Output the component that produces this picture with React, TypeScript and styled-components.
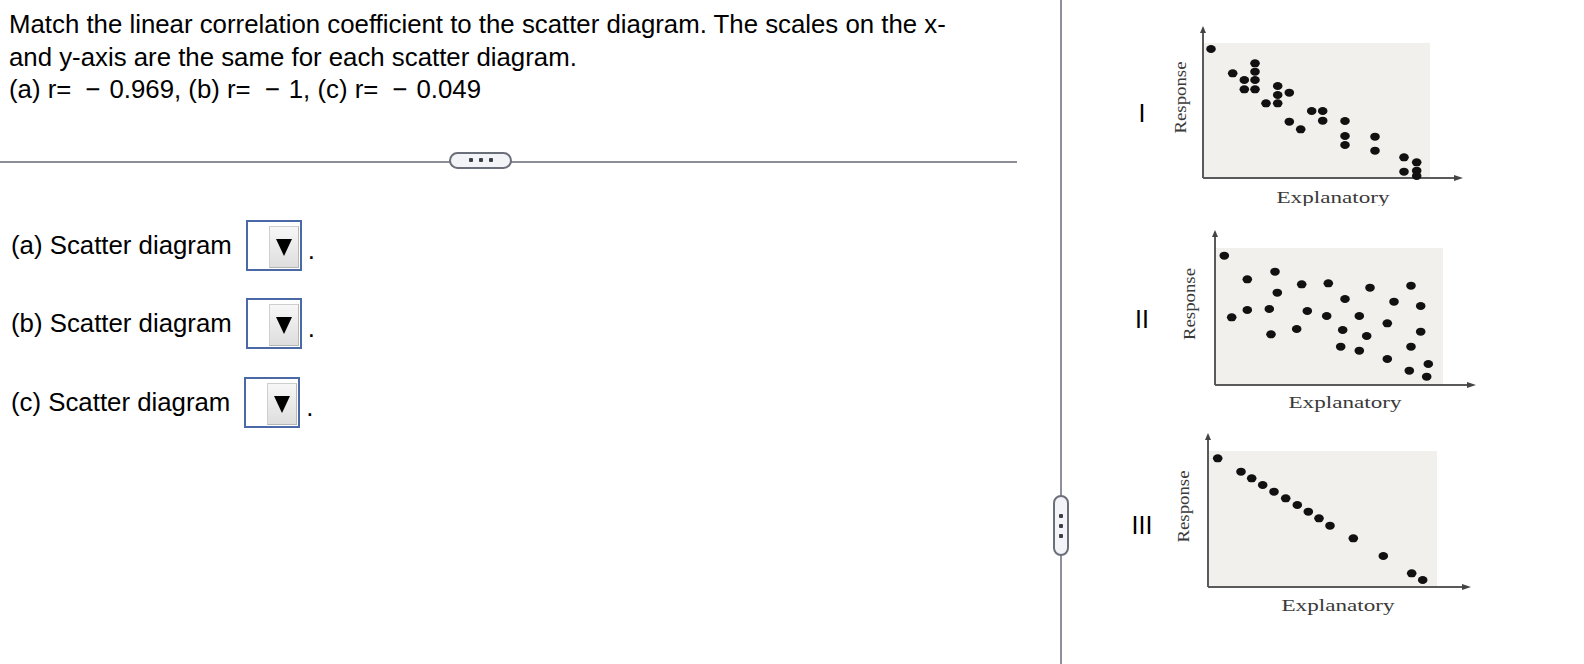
import React from 'react';
import styled, { createGlobalStyle } from 'styled-components';

const GlobalStyle = createGlobalStyle`
  html, body {
    margin: 0;
    padding: 0;
    background: #fff;
  }
  body {
    font-family: "Liberation Sans", Arial, sans-serif;
    color: #000;
  }
`;

const Page = styled.div`
  display: flex;
  width: 1584px;
  height: 664px;
  overflow: hidden;
`;

const LeftPanel = styled.div`
  flex: none;
  width: 1053px;
  display: flex;
  flex-direction: column;
`;

const Question = styled.div`
  padding: 8px 0 0 9px;
  font-size: 25.8px;
  line-height: 32.6px;
`;

const Minus = styled.span`
  margin: 0 9px 0 14px;
`;

const Separator = styled.div`
  position: relative;
  width: 1017px;
  height: 2px;
  margin-top: 55px;
  background: #8b8e97;
`;

const HPill = styled.div`
  position: absolute;
  left: 449px;
  top: -9px;
  width: 63px;
  height: 17px;
  box-sizing: border-box;
  border: 2px solid #6b6f7a;
  border-radius: 9px;
  background: #f3f4f8;
  display: flex;
  align-items: center;
  justify-content: center;
  gap: 6px;
`;

const Dot = styled.span`
  width: 4px;
  height: 4px;
  border-radius: 1px;
  background: #3c3f48;
`;

const RowList = styled.div`
  display: flex;
  flex-direction: column;
  gap: 27.5px;
  padding: 57px 0 0 11px;
`;

const Row = styled.div`
  display: flex;
  align-items: center;
  font-size: 25.8px;
`;

const Select = styled.div`
  box-sizing: border-box;
  width: 56px;
  height: 51px;
  margin-left: 14px;
  border: 2px solid #4b69a6;
  display: flex;
  justify-content: flex-end;
  align-items: center;
  padding: 3px 1px 0 0;
`;

const SelectButton = styled.div`
  box-sizing: border-box;
  width: 30px;
  height: 42px;
  border: 1px solid #cfcfcf;
  border-right-color: #b9b9b9;
  border-bottom-color: #b5b5b5;
  background: linear-gradient(#f7f7f7, #dedede);
  display: flex;
  align-items: center;
  justify-content: center;
`;

const Triangle = styled.span`
  width: 0;
  height: 0;
  border-left: 8.5px solid transparent;
  border-right: 8.5px solid transparent;
  border-top: 17px solid #000;
  margin-top: 1px;
`;

const Period = styled.span`
  margin-left: 6px;
  align-self: flex-end;
  margin-bottom: 6px;
`;

const Divider = styled.div`
  position: relative;
  flex: none;
  width: 16px;
  display: flex;
  justify-content: center;
`;

const DividerLine = styled.div`
  width: 2px;
  height: 100%;
  background: #8e9099;
`;

const VPill = styled.div`
  position: absolute;
  top: 495px;
  left: 0;
  width: 16px;
  height: 61px;
  box-sizing: border-box;
  border: 2px solid #6b6f7a;
  border-radius: 8px;
  background: #f3f4f8;
  display: flex;
  flex-direction: column;
  align-items: center;
  justify-content: center;
  gap: 6px;
`;

const RightPanel = styled.div`
  display: flex;
  flex-direction: column;
  gap: 20px;
  padding: 20px 0 0 53px;
`;

const ChartRow = styled.div`
  display: flex;
  align-items: center;
`;

const Numeral = styled.div`
  width: 40px;
  text-align: center;
  font-size: 25px;
`;

const ChartSvg = styled.svg`
  display: block;
  width: 320px;
  height: 186px;
`;

const AxisLabel = styled.text`
  font-family: "Liberation Serif", "Times New Roman", serif;
  font-size: 17.5px;
  fill: #3a3a3a;
`;

type Pt = [number, number];

interface Chart {
  label: string;
  top: number;
  plot: { x0: number; x1: number; y0: number; y1: number };
  axisTop: number;
  arrowEnd: number;
  xLabel: Pt;
  yLabel: Pt;
  dots: Pt[];
}

const charts: Chart[] = [
  {
    label: 'I',
    top: 20,
    plot: { x0: 1203, x1: 1430, y0: 43, y1: 178 },
    axisTop: 26,
    arrowEnd: 1463,
    xLabel: [1333, 203],
    yLabel: [1186, 97.5],
    dots: [
      [1211, 49], [1232.7, 73.3], [1244.3, 80], [1244.3, 89.3], [1255, 63.3],
      [1255, 71.7], [1255, 80], [1255, 89.3], [1266, 103.3], [1277.7, 86],
      [1277.7, 95], [1277.7, 103.3], [1289.3, 92.7], [1289.3, 121.7], [1300.7, 129.3],
      [1311.7, 111], [1322.7, 111], [1322.7, 120.7], [1345, 121], [1345, 136],
      [1345, 145], [1375, 136.7], [1375, 150.7], [1404, 157.3], [1404, 171.7],
      [1416.7, 162.3], [1416.7, 170.7], [1416.7, 176],
    ],
  },
  {
    label: 'II',
    top: 226,
    plot: { x0: 1215, x1: 1443, y0: 248, y1: 385 },
    axisTop: 230,
    arrowEnd: 1476,
    xLabel: [1345, 408],
    yLabel: [1195, 304],
    dots: [
      [1224.3, 255.7], [1247.3, 279.3], [1231.7, 317.3], [1247.3, 310], [1275, 271.7],
      [1277.3, 292.7], [1269.3, 309], [1271, 334.3], [1296.7, 329], [1301.7, 284.3],
      [1307.3, 311], [1328.3, 283.3], [1326.7, 316], [1345, 299], [1342.7, 330],
      [1340.7, 346.7], [1359.3, 316], [1359.3, 350.7], [1366.7, 336], [1370, 287.7],
      [1387.3, 323.3], [1387.3, 359], [1394, 301.7], [1411, 285.7], [1420.7, 306],
      [1420.7, 331.7], [1411, 346.7], [1409.3, 370.7], [1428.3, 364], [1426.7, 376.7],
    ],
  },
  {
    label: 'III',
    top: 432,
    plot: { x0: 1208, x1: 1437, y0: 451, y1: 587 },
    axisTop: 433,
    arrowEnd: 1471,
    xLabel: [1338, 611],
    yLabel: [1189, 506.5],
    dots: [
      [1217.7, 458.3], [1241, 471.7], [1251.7, 478.3], [1262.7, 485], [1274, 491.7],
      [1285.7, 498.3], [1297.3, 505], [1308.3, 511.7], [1319, 518.3], [1330, 525.7],
      [1353.3, 538.3], [1383.3, 556], [1411.7, 573.3], [1422.7, 580],
    ],
  },
];

const ScatterChart: React.FC<{ chart: Chart }> = ({ chart }) => {
  const { plot, dots } = chart;
  // viewBox uses page coordinates so the dot data can be read straight off the screenshot
  return (
    <ChartSvg viewBox={`1162 ${chart.top} 320 186`}>
      <rect x={plot.x0} y={plot.y0} width={plot.x1 - plot.x0} height={plot.y1 - plot.y0} fill="#f1f0ec" />
      <line x1={plot.x0} y1={chart.axisTop + 4} x2={plot.x0} y2={plot.y1} stroke="#5a5a5a" strokeWidth={2} />
      <line x1={plot.x0} y1={plot.y1} x2={chart.arrowEnd - 6} y2={plot.y1} stroke="#5a5a5a" strokeWidth={2} />
      <polygon
        points={`${plot.x0 - 3},${chart.axisTop + 7} ${plot.x0},${chart.axisTop} ${plot.x0 + 3},${chart.axisTop + 7}`}
        fill="#444"
      />
      <polygon
        points={`${chart.arrowEnd - 9},${plot.y1 - 3} ${chart.arrowEnd},${plot.y1} ${chart.arrowEnd - 9},${plot.y1 + 3}`}
        fill="#444"
      />
      {dots.map(([x, y], i) => (
        <ellipse key={i} cx={x} cy={y} rx={4.8} ry={4} fill="#111" />
      ))}
      <AxisLabel
        x={chart.xLabel[0] - 56.5}
        y={chart.xLabel[1]}
        textLength={113}
        lengthAdjust="spacingAndGlyphs"
      >
        Explanatory
      </AxisLabel>
      <AxisLabel
        x={-36}
        y={0}
        transform={`translate(${chart.yLabel[0]} ${chart.yLabel[1]}) rotate(-90)`}
        textLength={72}
        lengthAdjust="spacingAndGlyphs"
      >
        Response
      </AxisLabel>
    </ChartSvg>
  );
};

const rows = ['(a)', '(b)', '(c)'];

const App: React.FC = () => {
  return (
    <>
      <GlobalStyle />
      <Page>
        <LeftPanel>
          <Question>
            Match the linear correlation coefficient to the scatter diagram. The scales on the x-
            <br />
            and y-axis are the same for each scatter diagram.
            <br />
            (a) r=<Minus>&minus;</Minus>0.969, (b) r=<Minus>&minus;</Minus>1, (c) r=<Minus>&minus;</Minus>0.049
          </Question>
          <Separator>
            <HPill>
              <Dot />
              <Dot />
              <Dot />
            </HPill>
          </Separator>
          <RowList>
            {rows.map((r) => (
              <Row key={r}>
                <span>{r} Scatter diagram</span>
                <Select>
                  <SelectButton>
                    <Triangle />
                  </SelectButton>
                </Select>
                <Period>.</Period>
              </Row>
            ))}
          </RowList>
        </LeftPanel>
        <Divider>
          <DividerLine />
          <VPill>
            <Dot />
            <Dot />
            <Dot />
          </VPill>
        </Divider>
        <RightPanel>
          {charts.map((c) => (
            <ChartRow key={c.label}>
              <Numeral>{c.label}</Numeral>
              <ScatterChart chart={c} />
            </ChartRow>
          ))}
        </RightPanel>
      </Page>
    </>
  );
};

export default App;
